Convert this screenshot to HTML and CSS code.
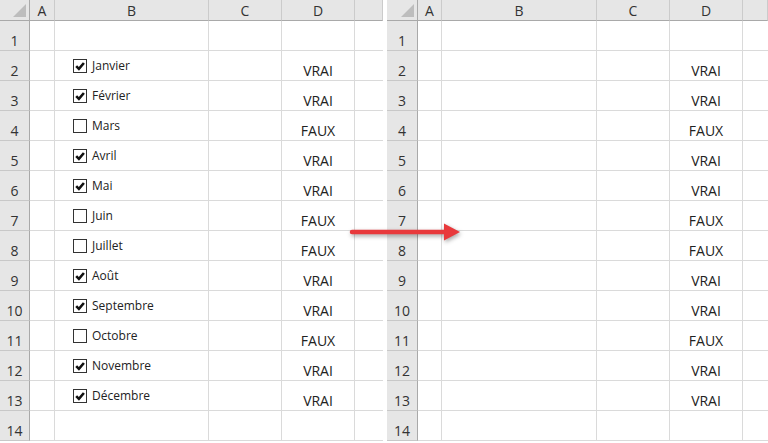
FILE: index.html
```html
<!DOCTYPE html>
<html lang="fr">
<head>
    <meta charset="UTF-8">
    <meta name="viewport" content="width=device-width, initial-scale=1.0">
    <title>Cases à cocher</title>
    <link rel="stylesheet" href="styles.css">
</head>
<body>
    <div class="page">
        <div class="sheet sheet-left" id="avant"></div>
        <div class="sheet sheet-right" id="apres"></div>

        <svg class="arrow" width="120" height="24" viewBox="0 0 120 24">
            <line x1="4" y1="10" x2="100" y2="10" stroke="#e8393c" stroke-width="4.5" stroke-linecap="round"/>
            <polygon points="96,1.5 112,10 96,18.5" fill="#e8393c"/>
        </svg>
    </div>

    <script>
        // Mois et état des cases
        const mois = [
            ['Janvier', true], ['Février', true], ['Mars', false], ['Avril', true],
            ['Mai', true], ['Juin', false], ['Juillet', false], ['Août', true],
            ['Septembre', true], ['Octobre', false], ['Novembre', true], ['Décembre', true]
        ];

        const check = '<svg viewBox="0 0 12 12" width="12" height="12">' +
            '<path d="M2.2 6.2 L4.9 8.9 L9.9 3" fill="none" stroke="#111" stroke-width="2.6"/></svg>';

        function cell(cls, html) {
            return '<div class="cell ' + cls + '">' + (html || '') + '</div>';
        }

        function construireFeuille(id, avecCases) {
            let html = '<div class="cell corner"><span class="tri"></span></div>';
            ['A', 'B', 'C', 'D', 'E'].forEach(l => {
                html += cell('hdr', l === 'E' ? '' : l);
            });

            for (let r = 1; r <= 14; r++) {
                const m = mois[r - 2];
                html += cell('num', r);
                html += cell('');
                if (m && avecCases) {
                    html += cell('chk', '<span class="box">' + (m[1] ? check : '') + '</span><span>' + m[0] + '</span>');
                } else {
                    html += cell('');
                }
                html += cell('');
                html += cell('val', m ? (m[1] ? 'VRAI' : 'FAUX') : '');
                html += cell('last');
            }
            document.getElementById(id).innerHTML = html;
        }

        construireFeuille('avant', true);
        construireFeuille('apres', false);
    </script>
</body>
</html>
```

FILE: styles.css
```css
body {
    margin: 0;
    background-color: white;
    font-family: "Open Sans", Arial, sans-serif;
    color: #222;
}
.page {
    position: relative;
    display: flex;
    gap: 4px;
    width: 768px;
    height: 443px;
    overflow: hidden;
}
.sheet {
    display: grid;
    grid-template-rows: 21px repeat(14, 30px);
    height: 443px;
    overflow: hidden;
}
.sheet-left {
    width: 383px;
    grid-template-columns: 30px 25px 154px 73px 73px 28px;
}
.sheet-right {
    width: 381px;
    grid-template-columns: 31px 24px 155px 73px 73px 25px;
}
.cell {
    box-sizing: border-box;
    border-right: 1px solid #dadada;
    border-bottom: 1px solid #dadada;
    display: flex;
    align-items: flex-end;
    font-size: 14px;
    line-height: 18px;
}
.cell.last {
    border-right: none;
}
.hdr, .corner {
    background-color: #e6e6e6;
    border-right: 1px solid #cbcbcb;
    border-bottom: 1px solid #a9a9a9;
    justify-content: center;
    align-items: center;
    line-height: 21px;
    color: #333;
}
.corner {
    position: relative;
    border-right: 1px solid #a9a9a9;
}
.tri {
    position: absolute;
    right: 3px;
    bottom: 3px;
    width: 0;
    height: 0;
    border-left: 13px solid transparent;
    border-bottom: 13px solid #bdbdbd;
}
.num {
    background-color: #e6e6e6;
    border-right: 1px solid #a9a9a9;
    border-bottom: 1px solid #c8c8c8;
    justify-content: center;
    color: #333;
}
.val {
    justify-content: center;
}
.chk {
    align-items: center;
    padding-left: 18px;
    padding-top: 1px;
    gap: 5px;
    font-size: 12px;
    line-height: 16px;
    color: #222;
}
.box {
    box-sizing: border-box;
    width: 14px;
    height: 14px;
    border: 1px solid #333;
    background-color: white;
    display: flex;
    align-items: center;
    justify-content: center;
}
.arrow {
    position: absolute;
    left: 348px;
    top: 222px;
    filter: drop-shadow(1px 2px 2px rgba(0,0,0,0.35));
}
```
